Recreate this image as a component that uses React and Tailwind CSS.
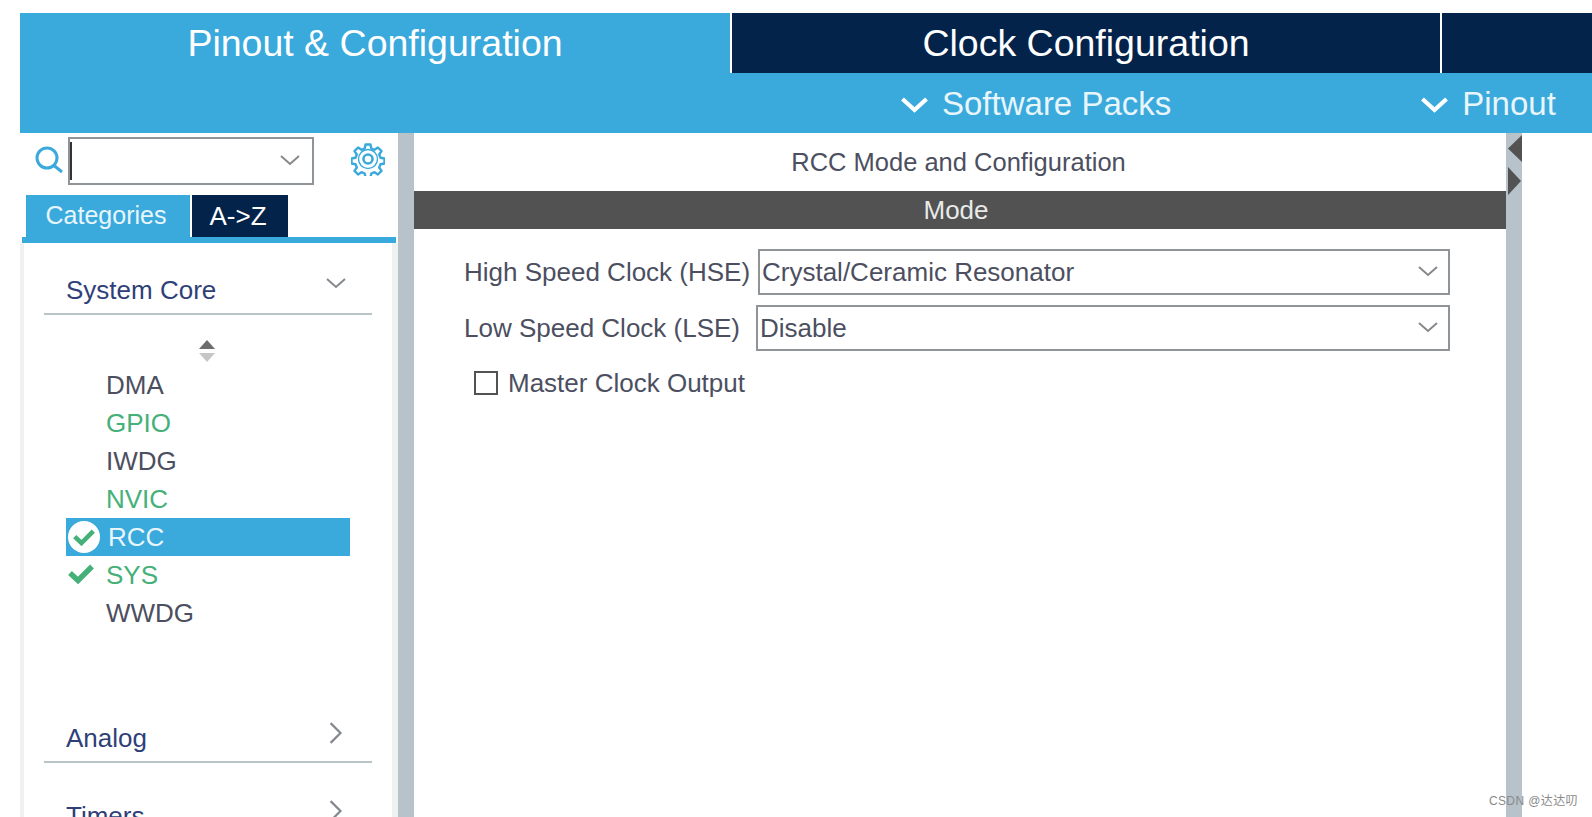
import React from "react";

const font = "font-['Liberation_Sans',sans-serif]";

const Chevron = ({ className = "", color = "#85898d", down = true, size = 20, weight = 2 }) => {
  return (
    <svg className={className} width={size} height={size} viewBox="0 0 20 20" fill="none">
      <path d={down ? "M1 5L10 13L19 5" : "M6 1L15 10L6 19"} stroke={color} strokeWidth={weight} />
    </svg>
  );
};

const HeaderChevron = () => {
  return (
    <svg className="mt-[2px]" width="27" height="16" viewBox="0 0 27 16" fill="none">
      <path d="M1.5 2L13.5 13L25.5 2" stroke="#ffffff" strokeWidth="4.2" />
    </svg>
  );
};

const SearchIcon = () => {
  return (
    <svg width="30" height="30" viewBox="0 0 30 30" fill="none">
      <circle cx="13" cy="13" r="10" stroke="#3aa9dc" strokeWidth="3" />
      <path d="M20 20.5L28 27" stroke="#3aa9dc" strokeWidth="3" />
    </svg>
  );
};

const GearIcon = () => {
  return (
    <svg width="34" height="34" viewBox="0 0 34 34" fill="none">
      <path
        d="M14.5 2.5h5l.8 4 3.2 1.3 3.4-2.3 3.6 3.6-2.3 3.4 1.3 3.2 4 .8v5l-4 .8-1.3 3.2 2.3 3.4-3.6 3.6-3.4-2.3-3.2 1.3-.8 4h-5l-.8-4-3.2-1.3-3.4 2.3-3.6-3.6 2.3-3.4-1.3-3.2-4-.8v-5l4-.8 1.3-3.2-2.3-3.4 3.6-3.6 3.4 2.3 3.2-1.3z"
        stroke="#3aa9dc"
        strokeWidth="2.4"
        strokeLinejoin="round"
      />
      <circle cx="17" cy="17" r="9.5" stroke="#3aa9dc" strokeWidth="1.4" />
      <circle cx="17" cy="17" r="4.5" stroke="#3aa9dc" strokeWidth="2.6" />
    </svg>
  );
};

const Check = ({ width = 26, height = 20 }) => {
  return (
    <svg width={width} height={height} viewBox="0 0 26 20" fill="none">
      <path d="M2 9L10 16.5L24 2.5" stroke="#45b078" strokeWidth="5.4" />
    </svg>
  );
};

const SortArrows = () => {
  return (
    <svg width="18" height="22" viewBox="0 0 18 22">
      <path d="M9 0L17 9H1z" fill="#6b6d6f" />
      <path d="M1 13H17L9 22z" fill="#c4c6c8" />
    </svg>
  );
};

const peripherals = [
  { name: "DMA", color: "text-[#4c4f5f]" },
  { name: "GPIO", color: "text-[#45b078]" },
  { name: "IWDG", color: "text-[#4c4f5f]" },
  { name: "NVIC", color: "text-[#45b078]" },
  { name: "RCC", selected: true },
  { name: "SYS", color: "text-[#45b078]", check: true },
  { name: "WWDG", color: "text-[#4c4f5f]" },
];

const Category = ({ name, open, last }) => {
  return (
    <div className={"mx-[20px] flex justify-between pl-[22px] pr-[26px] " + (last ? "" : "h-[50px] border-b-2 border-[#b9c3ca]")}>
      <span className="mt-[9px] text-[26px] leading-[32px] text-[#2f3f78]">{name}</span>
      {open ? <Chevron className="mt-[9px]" size={20} /> : <Chevron className="mt-[9px]" down={false} size={22} />}
    </div>
  );
};

const Sidebar = () => {
  return (
    <aside className="flex w-[378px] shrink-0 flex-col">
      <div className="flex h-[62px] shrink-0 items-start">
        <div className="ml-[14px] mt-[12px]">
          <SearchIcon />
        </div>
        <div className="ml-[4px] mt-[4px] flex h-[48px] w-[246px] items-center justify-between border-2 border-[#8f9499] pr-[12px]">
          <div className="h-[38px] w-[2px] bg-[#333333]" />
          <Chevron size={20} />
        </div>
        <div className="ml-[37px] mt-[9px]">
          <GearIcon />
        </div>
      </div>

      <div className="ml-[6px] flex h-[42px] shrink-0">
        <div className="flex w-[164px] items-center justify-center bg-[#3aa9dc] pr-[4px] text-[25px] text-[#e8f6fc]">Categories</div>
        <div className="ml-[2px] flex w-[96px] items-center justify-center bg-[#03234b] pr-[4px] text-[26px] text-white">A-&gt;Z</div>
      </div>
      <div className="ml-[2px] h-[6px] w-[374px] shrink-0 bg-[#3aa9dc]" />

      <div className="flex-1 border-l-4 border-r-[6px] border-[#f0f2f2] pt-[22px]">
        <Category name="System Core" open />
        <div className="mt-[25px] flex justify-center pr-[2px]">
          <SortArrows />
        </div>
        <div className="mt-[4px] flex flex-col pl-[42px]">
          {peripherals.map((p) =>
            p.selected ? (
              <div key={p.name} className="flex h-[38px] w-[284px] items-center bg-[#3aa9dc] pl-[2px] text-[26px] text-[#e8f6fc]">
                <div className="flex h-[32px] w-[32px] items-center justify-center rounded-full bg-white">
                  <Check width={22} height={17} />
                </div>
                <span className="ml-[8px]">{p.name}</span>
              </div>
            ) : (
              <div key={p.name} className={"relative flex h-[38px] items-center pl-[40px] text-[26px] " + p.color}>
                {p.check && (
                  <div className="absolute left-[2px] top-[8px]">
                    <Check />
                  </div>
                )}
                {p.name}
              </div>
            )
          )}
        </div>
        <div className="mt-[81px]">
          <Category name="Analog" />
        </div>
        <div className="mt-[28px]">
          <Category name="Timers" last />
        </div>
      </div>
    </aside>
  );
};

const Select = ({ value, className }) => {
  return (
    <div className={"flex h-[46px] items-center justify-between border-2 border-[#8f9499] pl-[2px] pr-[10px] " + className}>
      <span>{value}</span>
      <Chevron size={20} />
    </div>
  );
};

const Main = () => {
  return (
    <main className="w-[1092px] shrink-0">
      <div className="flex h-[58px] items-center justify-center pr-[3px] text-[25.5px] text-[#4c4f5f]">RCC Mode and Configuration</div>
      <div className="flex h-[38px] items-center justify-center bg-[#515251] pr-[8px] text-[26px] text-[#e8eaea]">Mode</div>
      <div className="pl-[50px] pt-[20px] text-[26px] text-[#4c4f5f]">
        <div className="flex items-center">
          <span className="w-[294px] whitespace-nowrap">High Speed Clock (HSE)</span>
          <Select value="Crystal/Ceramic Resonator" className="w-[692px]" />
        </div>
        <div className="mt-[10px] flex items-center">
          <span className="w-[292px] whitespace-nowrap">Low Speed Clock (LSE)</span>
          <Select value="Disable" className="w-[694px]" />
        </div>
        <div className="ml-[10px] mt-[20px] flex items-center">
          <div className="h-[24px] w-[24px] border-2 border-[#515251]" />
          <span className="ml-[10px] leading-[22px]">Master Clock Output</span>
        </div>
      </div>
    </main>
  );
};

const Splitter = ({ arrows }) => {
  return (
    <div className="w-[16px] shrink-0 bg-[#b7c2ca]">
      {arrows && (
        <div className="flex flex-col gap-[2px]">
          <svg width="16" height="30" viewBox="0 0 16 30">
            <path d="M16 2V29L2 15.5z" fill="#515251" />
          </svg>
          <svg width="16" height="30" viewBox="0 0 16 30">
            <path d="M2 2V30L15 16z" fill="#515251" />
          </svg>
        </div>
      )}
    </div>
  );
};

const App = () => {
  return (
    <div className={"relative h-[817px] w-[1592px] overflow-hidden bg-white pl-[20px] pt-[13px] " + font}>
      <header className="h-[120px] bg-[#3aa9dc]">
        <div className="flex h-[60px]">
          <div className="flex w-[710px] items-center justify-center text-[37.5px] text-white">Pinout &amp; Configuration</div>
          <div className="flex w-[712px] items-center justify-center border-x-2 border-white bg-[#03234b] text-[37.5px] text-white">Clock Configuration</div>
          <div className="flex-1 bg-[#03234b]" />
        </div>
        <div className="flex h-[60px] items-center pt-[2px] text-[33px] text-[#e8f6fc]">
          <div className="ml-[881px] flex items-center">
            <HeaderChevron />
            <span className="ml-[14px]">Software Packs</span>
          </div>
          <div className="ml-[250px] flex items-center">
            <HeaderChevron />
            <span className="ml-[14px]">Pinout</span>
          </div>
        </div>
      </header>
      <div className="flex h-[684px]">
        <Sidebar />
        <Splitter />
        <Main />
        <Splitter arrows />
      </div>
      <div className="absolute bottom-[7px] right-[14px] font-['Liberation_Sans','Noto_Sans_CJK_SC',sans-serif] text-[12px] tracking-[0.4px] text-[#8a8a8a]">CSDN @达达叨</div>
    </div>
  );
};

export default App;
